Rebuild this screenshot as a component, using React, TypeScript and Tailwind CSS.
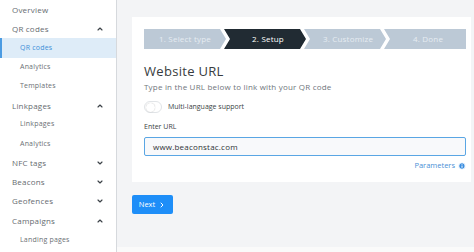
import { ChevronDown, ChevronRight, ChevronUp, Info } from "lucide-react";
import React from "react";

type NavItem = {
  label: string;
  sub?: boolean;
  active?: boolean;
  toggle?: "up" | "down";
};

const navItems: NavItem[] = [
  { label: "Overview" },
  { label: "QR codes", toggle: "up" },
  { label: "QR codes", sub: true, active: true },
  { label: "Analytics", sub: true },
  { label: "Templates", sub: true },
  { label: "Linkpages", toggle: "up" },
  { label: "Linkpages", sub: true },
  { label: "Analytics", sub: true },
  { label: "NFC tags", toggle: "down" },
  { label: "Beacons", toggle: "down" },
  { label: "Geofences", toggle: "down" },
  { label: "Campaigns", toggle: "up" },
  { label: "Landing pages", sub: true },
];

const steps = [
  { label: "1. Select type", done: true },
  { label: "2. Setup", current: true },
  { label: "3. Customize" },
  { label: "4. Done" },
];

const firstClip = "polygon(0 0, calc(100% - 6px) 0, 100% 50%, calc(100% - 6px) 100%, 0 100%)";
const midClip =
  "polygon(0 0, calc(100% - 6px) 0, 100% 50%, calc(100% - 6px) 100%, 0 100%, 6px 50%)";
const lastClip = "polygon(0 0, 100% 0, 100% 100%, 0 100%, 6px 50%)";

const Sidebar: React.FC = () => (
  <aside className="w-[117px] shrink-0 bg-white border-r border-[#d6d9dd]">
    {navItems.map((item, i) => (
      <div
        key={i}
        className={`relative flex items-center h-[19.2px] tracking-[0.2px] ${
          item.active ? "bg-[#deecf8]" : ""
        } ${item.sub ? "pl-[20px] text-[7px]" : "pl-[12px] text-[8px]"}`}
      >
        {item.active && (
          <span className="absolute left-0 top-0 h-full w-[2px] bg-[#4b9be2]" />
        )}
        <span
          className={
            item.active ? "text-[#3d8fd8]" : item.sub ? "text-[#6b7075]" : "text-[#666b70]"
          }
        >
          {item.label}
        </span>
        {item.toggle === "up" && (
          <ChevronUp className="absolute right-[12px] w-[8px] h-[8px] text-[#3c4248]" strokeWidth={3.5} />
        )}
        {item.toggle === "down" && (
          <ChevronDown className="absolute right-[12px] w-[8px] h-[8px] text-[#3c4248]" strokeWidth={3.5} />
        )}
      </div>
    ))}
  </aside>
);

const Stepper: React.FC = () => (
  <div className="flex h-[20px]">
    {steps.map((step, i) => (
      <div
        key={i}
        className={`flex items-center justify-center w-[82px] text-[8px] tracking-[0.2px] ${
          i > 0 ? "-ml-[2px]" : ""
        } ${step.current ? "bg-[#212b33] text-white" : "bg-[#bcc9d6] text-[#e6ecf2]"}`}
        style={{ clipPath: i === 0 ? firstClip : i === steps.length - 1 ? lastClip : midClip }}
      >
        <span className={i === 0 ? "" : "pl-[6px]"}>{step.label}</span>
      </div>
    ))}
  </div>
);

export default function App() {
  return (
    <div
      className="flex w-[474px] h-[252px] bg-[#fafafa] overflow-hidden"
      style={{ fontFamily: '"Open Sans", "Liberation Sans", sans-serif' }}
    >
      <Sidebar />
      <main className="flex-1 h-[247px] bg-[#f3f4f6] pt-[17px] pl-[15px] pr-[4px]">
        <section className="bg-white pt-[12px] pl-[12px] pr-[5px] pb-[11px]">
          <Stepper />
          <h2 className="mt-[14px] text-[13px] leading-[16px] tracking-[0.3px] text-[#383c40]">
            Website URL
          </h2>
          <p className="mt-[2px] text-[8px] leading-[11px] tracking-[0.2px] text-[#70767c]">
            Type in the URL below to link with your QR code
          </p>
          <div className="mt-[9px] flex items-center gap-[6px]">
            <span className="w-[18px] h-[12px] rounded-full border border-[#e1e4e7] bg-white flex items-center">
              <span className="ml-[1px] w-[9px] h-[9px] rounded-full bg-white shadow-[0_0_1px_rgba(0,0,0,0.3)]" />
            </span>
            <span className="text-[7px] text-[#3a3f44]">Multi-language support</span>
          </div>
          <label className="block mt-[9px] text-[7px] leading-[10px] text-[#3a3f44]">Enter URL</label>
          <div className="mt-[5px] h-[19px] flex items-center rounded-[2px] border border-[#5aa6e4] bg-[#f8f9fb] pl-[8px] text-[8px] tracking-[0.2px] text-[#2f3337]">
            www.beaconstac.com
          </div>
          <div className="mt-[5px] h-[10px] flex items-center justify-end gap-[3px] text-[7.5px] text-[#4a90d6]">
            <span>Parameters</span>
            <Info className="w-[8px] h-[8px] fill-[#3b8ee0] text-white" strokeWidth={3} />
          </div>
        </section>
        <button className="mt-[13px] flex items-center gap-[3px] h-[19px] w-[41px] justify-center rounded-[2px] bg-[#1e8ef8] text-[7.5px] text-white">
          Next
          <ChevronRight className="w-[8px] h-[8px]" strokeWidth={3} />
        </button>
      </main>
    </div>
  );
}
